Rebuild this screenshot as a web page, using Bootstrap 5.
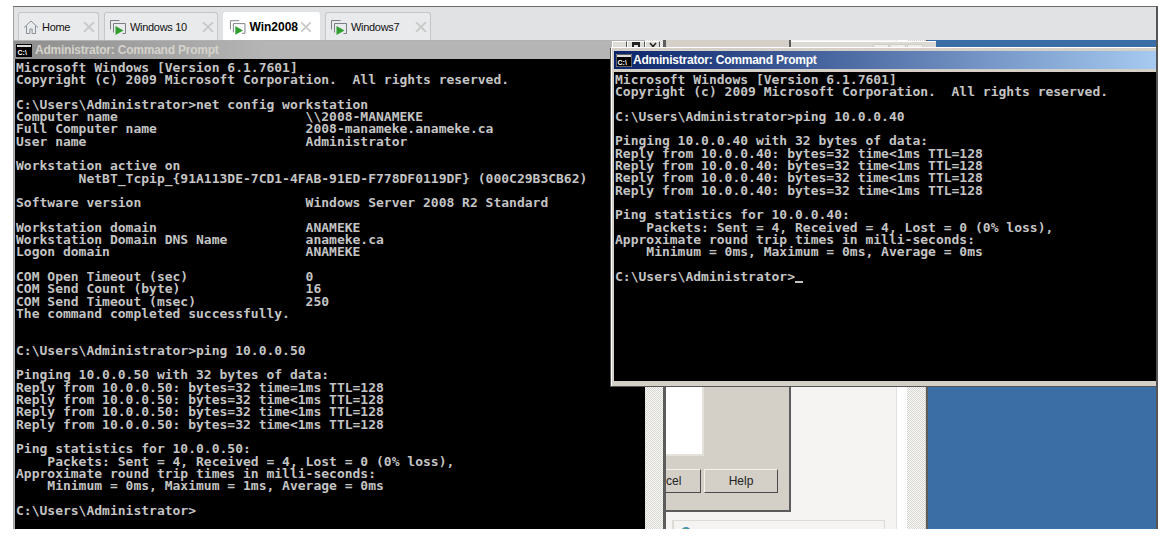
<!DOCTYPE html>
<html lang="en"><head><meta charset="utf-8"><title>Command Prompt</title>
<link rel="stylesheet" href="https://cdn.jsdelivr.net/npm/bootstrap@5.3.0/dist/css/bootstrap.min.css">
<style>
html,body{background:#fff;height:543px;overflow:hidden}
.vm-frame{margin:6px 0 0 13px;width:1145px;height:523px;border-top:1px solid #6a6a6a;border-left:1px solid #a0a0a0;border-right:2px solid #555}
.tab-bar{height:33px;background:#e1e2e4;padding:5px 0 0 4px;gap:5px}
.vm-tab{height:28px;border:1px solid #c4c6c9;border-bottom:0;border-radius:3px 3px 0 0;background:#e9eaec;font:11px "Liberation Sans",sans-serif;letter-spacing:-.3px;color:#111;padding:0 2px 0 4px;gap:3px}
.vm-tab.now{background:#fff;border-color:#fff;font-weight:700;font-size:12px;letter-spacing:0;color:#000;padding:0 8px 0 5px}
.x-mark{flex:none}
.desk{background:#3b6ea5;flex:1 1 auto;min-height:0;overflow:hidden}
.cmd{position:absolute;display:flex;flex-direction:column}
.cmd-left{left:0;top:0;bottom:0;width:631px;background:#b2b2b2;padding-top:1px}
.cmd-right{left:596px;top:7px;right:0;height:340px;background:#d4d0c8;border:1px solid #555;border-top-color:#fff;border-right:0;padding:3px 0 5px 3px;box-shadow:inset 1px 0 0 #fff}
.t-bar{height:18px;flex:none;font:700 12px/18px "Liberation Sans",sans-serif;letter-spacing:-.22px;white-space:nowrap;padding-left:2px}
.cmd-left .t-bar{background:linear-gradient(90deg,#8d8d8d,#b5b5b5 40%);color:#d6d3cb;gap:3px}
.cmd-right .t-bar{background:linear-gradient(90deg,#0a246a,#a6caf0);color:#fff;margin-bottom:3px;gap:1px}
.screen{flex:1 1 auto;background:#000;margin:0;overflow:hidden;color:#c4c4c4;font:700 13px/12.3px "DejaVu Sans Mono",monospace;padding-top:3px;padding-left:1px}
.cmd-left .screen{margin-left:1px}
.cmd-right .screen{padding-top:2px}
.caret-mark{display:inline-block;width:8px;height:2px;background:#c4c4c4;vertical-align:-2px}
.back-win{position:absolute;left:631px;top:0;bottom:0;width:283px;background:#f5f4f2}
.dither{width:18px;flex:none;background:repeating-conic-gradient(#d9d7d1 0 25%,#f8f8f6 0 50%) 0 0/2px 2px}
.back-main{position:relative;border-left:3px solid #5c5c5c;border-right:1px solid #e4e2dd;flex:1 1 auto}
.back-gap{width:10px;background:#fff;flex:none}
.back-edge{width:3px;flex:none;background:#d8d5cc;border-right:2px solid #5c5c5c}
.dlg{position:absolute;left:0;top:0;width:125px;height:472px;background:#d4d0c8;border-right:2px solid #5c5c5c;border-bottom:2px solid #5c5c5c;overflow:hidden}
.dlg-white{position:absolute;left:0;bottom:54px;width:38px;height:80px;background:#fff;border:solid #e4e1da;border-width:0 2px 2px 0}
.dlg-btn{position:absolute;top:429px;height:24px;background:#d4d0c8;border:1px solid;border-color:#f4f2ee #4a4a4a #4a4a4a #f4f2ee;font:12px/22px "Liberation Sans",sans-serif;color:#222;text-align:center;overflow:hidden}
.b-cancel{left:0;width:35px;border-left:0;border-top-color:#f4f2ee;text-align:right;padding-right:20px}
.b-help{left:38px;width:74px}
.lower-box{position:absolute;left:7px;top:480px;width:212px;height:20px;background:#f5f4f2;border:1px solid #dddbd6}
.lower-line{position:absolute;left:6px;top:480px;bottom:0;width:1px;background:#dddbd6}
.top-strip{position:absolute;left:2px;right:-40px;top:1px;height:8px;background:#dcdad4;border-top:1px solid #fff}
.mini{position:absolute;top:2px;height:7px;width:16px;background:#efeee9;border:1px solid #cfcdc6;border-bottom:0}
.ctrl-set{position:absolute;left:598px;top:1px}
.ctrl{width:15px;height:9px;background:#dedcd6;border:1px solid #fff;border-right-color:#555;border-bottom:0;text-align:center;line-height:0}
.ctrl.mid{width:18px}
</style></head><body>
<div class="vm-frame d-flex flex-column">
 <div class="tab-bar d-flex flex-shrink-0">
  <div class="vm-tab d-flex align-items-center" style="width:81px"><svg width="16" height="16" viewBox="0 0 16 16" fill="none" stroke="#8a9099"><path d="M1 8.500 8 2l7 6.500M3.500 7v7.500h3.400V10h2.200v4.500h3.400V7"/></svg><span class="flex-fill">Home</span><svg class="x-mark" width="14" height="10" viewBox="0 0 14 10" fill="none" stroke="#c9c9c9" stroke-width="1.800"><path d="M2 0l10 10M12 0 2 10"/></svg></div>
  <div class="vm-tab d-flex align-items-center" style="width:114px"><svg width="18" height="18" viewBox="0 0 18 18" fill="none"><path d="M1.500 11.500v-9h9M4.500 14.500v-9h12v10h-3" stroke="#7a7f85"/><path d="M6.500 8v9l8-4.500z" fill="#2f9e2f"/></svg><span class="flex-fill">Windows 10</span><svg class="x-mark" width="14" height="10" viewBox="0 0 14 10" fill="none" stroke="#c9c9c9" stroke-width="1.800"><path d="M2 0l10 10M12 0 2 10"/></svg></div>
  <div class="vm-tab now d-flex align-items-center" style="width:97px"><svg width="18" height="18" viewBox="0 0 18 18" fill="none"><path d="M1.500 11.500v-9h9M4.500 14.500v-9h12v10h-3" stroke="#7a7f85"/><path d="M6.500 8v9l8-4.500z" fill="#2f9e2f"/></svg><span class="flex-fill">Win2008</span><svg class="x-mark" width="10" height="10" viewBox="0 0 10 10" fill="none" stroke="#c9c9c9" stroke-width="1.800"><path d="M0 0l10 10M10 0 0 10"/></svg></div>
  <div class="vm-tab d-flex align-items-center" style="width:106px"><svg width="18" height="18" viewBox="0 0 18 18" fill="none"><path d="M1.500 11.500v-9h9M4.500 14.500v-9h12v10h-3" stroke="#7a7f85"/><path d="M6.500 8v9l8-4.500z" fill="#2f9e2f"/></svg><span class="flex-fill">Windows7</span><svg class="x-mark" width="14" height="10" viewBox="0 0 14 10" fill="none" stroke="#c9c9c9" stroke-width="1.800"><path d="M2 0l10 10M12 0 2 10"/></svg></div>
 </div>
 <div class="desk position-relative">
  <div class="back-win d-flex">
   <div class="dither"></div>
   <div class="back-main">
    <div class="top-strip"><span class="mini" style="left:205px"></span><span class="mini" style="left:222px"></span><span class="mini" style="left:239px"></span></div>
    <div class="dlg"><div class="dlg-white"></div><div class="dlg-btn b-cancel">cel</div><div class="dlg-btn b-help">Help</div></div>
    <div class="lower-line"></div>
    <div class="lower-box"><svg width="14" height="14" viewBox="0 0 14 14" style="margin:4px 0 0 5px;display:block"><circle cx="7" cy="7" r="5" fill="#3f8fc9"/><path d="M3 7a4 4 0 0 1 4-4v4z" fill="#5aa846"/></svg></div>
   </div>
   <div class="back-gap"></div>
   <div class="dither"></div>
   <div class="back-edge"></div>
  </div>
  <div class="cmd cmd-left">
   <div class="t-bar d-flex align-items-center"><svg width="16" height="13" viewBox="0 0 16 13"><rect width="16" height="13" fill="#000"/><rect x="1" y="1" width="14" height="2" fill="#ddd"/><text x="1.500" y="10.500" font-size="7" font-family="Liberation Sans" font-weight="700" letter-spacing="0" fill="#fff">C:\</text></svg><span>Administrator: Command Prompt</span></div>
<pre class="screen">Microsoft Windows [Version 6.1.7601]
Copyright (c) 2009 Microsoft Corporation.  All rights reserved.

C:\Users\Administrator&gt;net config workstation
Computer name                        \\2008-MANAMEKE
Full Computer name                   2008-manameke.anameke.ca
User name                            Administrator

Workstation active on
        NetBT_Tcpip_{91A113DE-7CD1-4FAB-91ED-F778DF0119DF} (000C29B3CB62)

Software version                     Windows Server 2008 R2 Standard

Workstation domain                   ANAMEKE
Workstation Domain DNS Name          anameke.ca
Logon domain                         ANAMEKE

COM Open Timeout (sec)               0
COM Send Count (byte)                16
COM Send Timeout (msec)              250
The command completed successfully.


C:\Users\Administrator&gt;ping 10.0.0.50

Pinging 10.0.0.50 with 32 bytes of data:
Reply from 10.0.0.50: bytes=32 time=1ms TTL=128
Reply from 10.0.0.50: bytes=32 time&lt;1ms TTL=128
Reply from 10.0.0.50: bytes=32 time&lt;1ms TTL=128
Reply from 10.0.0.50: bytes=32 time&lt;1ms TTL=128

Ping statistics for 10.0.0.50:
    Packets: Sent = 4, Received = 4, Lost = 0 (0% loss),
Approximate round trip times in milli-seconds:
    Minimum = 0ms, Maximum = 1ms, Average = 0ms

C:\Users\Administrator&gt;</pre>
  </div>
  <div class="ctrl-set d-flex"><div class="ctrl"></div><div class="ctrl mid"><svg width="8" height="8" viewBox="0 0 8 8"><path d="M0 0h8v8H0zM2 3v3h4V3z" fill="#222" fill-rule="evenodd"/></svg></div><div class="ctrl"><svg width="8" height="8" viewBox="0 0 8 8" fill="none" stroke="#222" stroke-width="1.500"><path d="M1 1l6 7M7 1 1 8"/></svg></div></div>
  <div class="cmd cmd-right">
   <div class="t-bar d-flex align-items-center"><svg width="16" height="13" viewBox="0 0 16 13"><rect width="16" height="13" fill="#000" stroke="#bbb"/><rect x="1" y="1" width="14" height="2" fill="#ddd"/><text x="1.500" y="10.500" font-size="7" font-family="Liberation Sans" font-weight="700" letter-spacing="0" fill="#fff">C:\</text></svg><span>Administrator: Command Prompt</span></div>
<pre class="screen">Microsoft Windows [Version 6.1.7601]
Copyright (c) 2009 Microsoft Corporation.  All rights reserved.

C:\Users\Administrator&gt;ping 10.0.0.40

Pinging 10.0.0.40 with 32 bytes of data:
Reply from 10.0.0.40: bytes=32 time&lt;1ms TTL=128
Reply from 10.0.0.40: bytes=32 time&lt;1ms TTL=128
Reply from 10.0.0.40: bytes=32 time&lt;1ms TTL=128
Reply from 10.0.0.40: bytes=32 time&lt;1ms TTL=128

Ping statistics for 10.0.0.40:
    Packets: Sent = 4, Received = 4, Lost = 0 (0% loss),
Approximate round trip times in milli-seconds:
    Minimum = 0ms, Maximum = 0ms, Average = 0ms

C:\Users\Administrator&gt;<span class="caret-mark"></span></pre>
  </div>
 </div>
</div>
<script src="https://cdn.jsdelivr.net/npm/bootstrap@5.3.0/dist/js/bootstrap.bundle.min.js"></script>
</body></html>
